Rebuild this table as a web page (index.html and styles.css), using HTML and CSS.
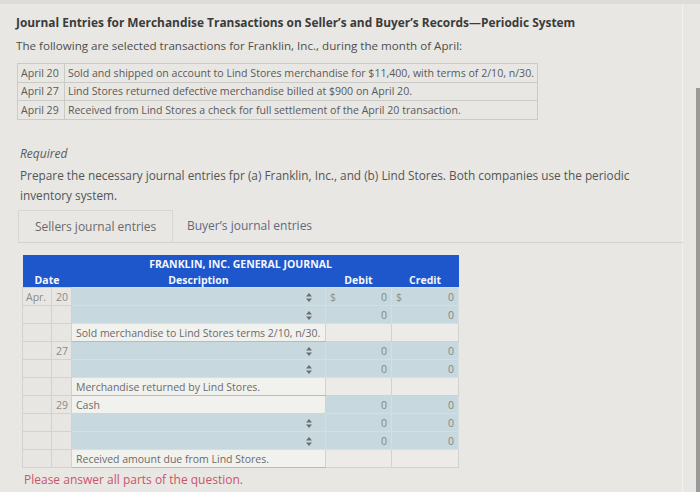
FILE: index.html
```html
<!DOCTYPE html>
<html>
<head>
<meta charset="utf-8">
<link rel="stylesheet" href="styles.css">
</head>
<body>
<div class="topband"></div>
<div class="frame">
  <main class="main">
    <h1 class="title">Journal Entries for Merchandise Transactions on Seller’s and Buyer’s Records—Periodic System</h1>
    <p class="intro">The following are selected transactions for Franklin, Inc., during the month of April:</p>
    <table class="tx">
      <tr><td class="tx-date">April 20</td><td>Sold and shipped on account to Lind Stores merchandise for $11,400, with terms of 2/10, n/30.</td></tr>
      <tr><td class="tx-date">April 27</td><td>Lind Stores returned defective merchandise billed at $900 on April 20.</td></tr>
      <tr><td class="tx-date">April 29</td><td>Received from Lind Stores a check for full settlement of the April 20 transaction.</td></tr>
    </table>

    <p class="req">Required</p>
    <p class="prep">Prepare the necessary journal entries fpr (a) Franklin, Inc., and (b) Lind Stores. Both companies use the periodic inventory system.</p>

    <div class="tabs">
      <div class="tab active">Sellers journal entries</div>
      <div class="tab">Buyer’s journal entries</div>
    </div>

    <table class="jr">
      <colgroup>
        <col class="c-mo"><col class="c-day"><col class="c-desc"><col class="c-dr"><col class="c-cr">
      </colgroup>
      <thead>
        <tr><th colspan="5" class="jr-title">FRANKLIN, INC. GENERAL JOURNAL</th></tr>
        <tr><th colspan="2">Date</th><th>Description</th><th>Debit</th><th>Credit</th></tr>
      </thead>
      <tbody>
        <tr>
          <td class="d">Apr.</td><td class="d num">20</td>
          <td class="in sel"><span class="spin"><svg width="6" height="9" viewBox="0 0 6 9"><path d="M3 0L6 3.5H0Z M3 9L0 5.5H6Z" fill="#6d6d6d"/></svg></span></td>
          <td class="in amt"><span class="cur">$</span>0</td>
          <td class="in amt"><span class="cur">$</span>0</td>
        </tr>
        <tr>
          <td class="d"></td><td class="d"></td>
          <td class="in sel"><span class="spin"><svg width="6" height="9" viewBox="0 0 6 9"><path d="M3 0L6 3.5H0Z M3 9L0 5.5H6Z" fill="#6d6d6d"/></svg></span></td>
          <td class="in amt">0</td><td class="in amt">0</td>
        </tr>
        <tr class="ex">
          <td class="d"></td><td class="d"></td>
          <td class="exp">Sold merchandise to Lind Stores terms 2/10, n/30.</td>
          <td class="blank"></td><td class="blank"></td>
        </tr>
        <tr>
          <td class="d"></td><td class="d num">27</td>
          <td class="in sel"><span class="spin"><svg width="6" height="9" viewBox="0 0 6 9"><path d="M3 0L6 3.5H0Z M3 9L0 5.5H6Z" fill="#6d6d6d"/></svg></span></td>
          <td class="in amt">0</td><td class="in amt">0</td>
        </tr>
        <tr>
          <td class="d"></td><td class="d"></td>
          <td class="in sel"><span class="spin"><svg width="6" height="9" viewBox="0 0 6 9"><path d="M3 0L6 3.5H0Z M3 9L0 5.5H6Z" fill="#6d6d6d"/></svg></span></td>
          <td class="in amt">0</td><td class="in amt">0</td>
        </tr>
        <tr class="ex">
          <td class="d"></td><td class="d"></td>
          <td class="exp">Merchandise returned by Lind Stores.</td>
          <td class="blank"></td><td class="blank"></td>
        </tr>
        <tr>
          <td class="d"></td><td class="d num">29</td>
          <td class="fixed">Cash</td>
          <td class="in amt">0</td><td class="in amt">0</td>
        </tr>
        <tr>
          <td class="d"></td><td class="d"></td>
          <td class="in sel"><span class="spin"><svg width="6" height="9" viewBox="0 0 6 9"><path d="M3 0L6 3.5H0Z M3 9L0 5.5H6Z" fill="#6d6d6d"/></svg></span></td>
          <td class="in amt">0</td><td class="in amt">0</td>
        </tr>
        <tr>
          <td class="d"></td><td class="d"></td>
          <td class="in sel"><span class="spin"><svg width="6" height="9" viewBox="0 0 6 9"><path d="M3 0L6 3.5H0Z M3 9L0 5.5H6Z" fill="#6d6d6d"/></svg></span></td>
          <td class="in amt">0</td><td class="in amt">0</td>
        </tr>
        <tr class="ex">
          <td class="d"></td><td class="d"></td>
          <td class="exp">Received amount due from Lind Stores.</td>
          <td class="blank"></td><td class="blank"></td>
        </tr>
      </tbody>
    </table>
    <p class="warn">Please answer all parts of the question.</p>
  </main>
  <div class="rail"><div class="thumb"></div></div>
</div>
</body>
</html>
```

FILE: styles.css
```css
* { box-sizing: border-box; }
html, body { margin: 0; padding: 0; }
body {
  width: 700px;
  height: 492px;
  overflow: hidden;
  background: #e8e7e3;
  font-family: "Open Sans", "Liberation Sans", sans-serif;
  color: #555;
}
.topband { height: 4px; background: #dddcd8; }
.frame { display: flex; height: 488px; }
.main {
  width: 683px;
  border-right: 1px solid #f2f1ee;
  padding: 10px 0 0 16px;
}
.rail { flex: 1; display: flex; justify-content: flex-end; padding-top: 84px; }
.thumb { width: 4px; background: #9a9a98; }

.title {
  margin: 0;
  font-size: 11.9px;
  font-weight: 700;
  color: #3b3b3b;
  line-height: 16px;
  white-space: nowrap;
}
.intro {
  margin: 8px 0 0;
  font-size: 11.6px;
  line-height: 16px;
  color: #4e4e4e;
}
.tx {
  margin: 9px 0 0 1px;
  border-collapse: collapse;
  width: 521px;
  font-size: 10.6px;
  color: #5a5a5a;
}
.tx td {
  border: 1px solid #cacac6;
  height: 18.5px;
  padding: 0 3px;
  white-space: nowrap;
}
.tx-date { width: 48px; }

.req {
  margin: 26px 0 0 4px;
  font-size: 12px;
  font-style: italic;
  color: #5a5a5a;
  line-height: 16px;
}
.prep {
  margin: 3px 0 0 4px;
  font-size: 11.8px;
  line-height: 20px;
  color: #555;
  width: 625px;
}
.tabs {
  margin: 5px 0 0 2px;
  display: flex;
  border-bottom: 1px solid #d3d2ce;
  width: 665px;
}
.tab {
  height: 32px;
  padding: 0 14px;
  display: flex;
  align-items: center;
  font-size: 12px;
  color: #5f6a85;
}
.tab.active {
  color: #6a6a6a;
  border: 1px solid #d7d6d2;
  border-bottom: none;
  width: 155px;
  padding: 0 0 0 16px;
}

.jr {
  margin: 12px 0 0 6px;
  border-collapse: collapse;
  width: 436px;
  table-layout: fixed;
  font-size: 10.5px;
}
.c-mo { width: 29px; }
.c-day { width: 20px; }
.c-desc { width: 254px; }
.c-dr { width: 66px; }
.c-cr { width: 67px; }
.jr th {
  background: #1e56cb;
  color: #f4f6fb;
  font-weight: 700;
  font-size: 10.5px;
  padding: 0;
  height: 15px;
  line-height: 14px;
  text-align: center;
}
.jr th.jr-title { height: 16px; line-height: 18px; }
.jr td {
  height: 18px;
  padding: 0 4px;
  border: 1px solid #cfd3d2;
  color: #6a6a6a;
  white-space: nowrap;
}
.jr td.d { background: #e7e6e2; color: #8a8a86; padding: 0 3px; }
.jr td.num { text-align: right; }
.jr td.in { background: #c7d9de; border-color: #d4dfe1; }
.jr td.sel { text-align: right; padding-right: 13px; }
.spin { display: inline-flex; vertical-align: middle; }
.jr td.amt { text-align: right; color: #7d8688; padding-right: 4px; }
.cur { float: left; color: #8a8f90; }
.jr td.exp {
  background: #f1f1ee;
  border-bottom: 1px solid #b9bbba;
  color: #6b6b6b;
}
.jr td.fixed { background: #f1f1ee; color: #6b6b6b; }
.jr td.blank { background: #ecebe8; }
.warn {
  margin: 5px 0 0 8px;
  font-size: 12px;
  color: #c85569;
  line-height: 14px;
}
```
